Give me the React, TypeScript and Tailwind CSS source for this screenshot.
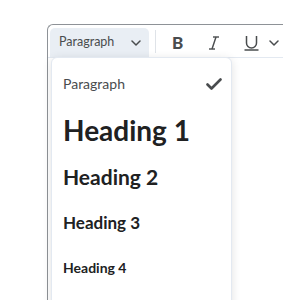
import React from "react";

const lato = { fontFamily: "Lato, 'Noto Sans', sans-serif" };

function Chevron({ className }: { className?: string }) {
  return (
    <svg width="10" height="6" viewBox="0 0 10 6" className={className}>
      <polyline points="1,1 5,5 9,1" fill="none" stroke="#494c4e" strokeWidth="1.5" strokeLinecap="round" strokeLinejoin="round" />
    </svg>
  );
}

export default function App() {
  const items = [
    { label: "Paragraph", cls: "text-[14px] font-normal text-[#494c4e]", check: true },
    { label: "Heading 1", cls: "text-[28px] font-bold text-[#202122]" },
    { label: "Heading 2", cls: "text-[21px] font-bold text-[#202122]" },
    { label: "Heading 3", cls: "text-[17px] font-bold text-[#202122]" },
    { label: "Heading 4", cls: "text-[14px] font-bold text-[#202122]" },
  ];
  return (
    <div className="relative w-[283px] h-[300px] bg-white overflow-hidden" style={lato}>
      <div className="ml-[47px] mt-[24px] h-[300px] border-l border-t border-[#8e9297] rounded-tl-[6px]">
        <div className="flex items-end h-[33px] pl-[2px] border-b border-[#e3e9f1]">
          <div className="flex items-center w-[99px] h-[29px] bg-[#e9eef4] rounded-t-[5px] pl-[9px]">
            <span className="text-[12.5px] text-[#494c4e] leading-none">Paragraph</span>
            <Chevron className="ml-auto mr-[8px]" />
          </div>
          <div className="self-center w-px h-[23px] bg-[#dfe3e8] ml-[6px]" />
          <div className="flex items-center h-[29px] self-end">
            <span className="ml-[16px] text-[17px] font-black text-[#494c4e] leading-none">B</span>
            <svg width="12" height="14" viewBox="0 0 12 14" className="ml-[25px]">
              <line x1="5" y1="1" x2="11" y2="1" stroke="#494c4e" strokeWidth="1.4" />
              <line x1="1" y1="13" x2="7" y2="13" stroke="#494c4e" strokeWidth="1.4" />
              <line x1="8" y1="1" x2="4" y2="13" stroke="#494c4e" strokeWidth="1.4" />
            </svg>
            <svg width="15" height="16" viewBox="0 0 15 16" className="ml-[24px]">
              <path d="M2.5 1 V8 a5 5 0 0 0 10 0 V1" fill="none" stroke="#494c4e" strokeWidth="1.5" />
              <line x1="0.5" y1="15" x2="14.5" y2="15" stroke="#494c4e" strokeWidth="1.5" />
            </svg>
            <Chevron className="ml-[10px]" />
          </div>
        </div>
      </div>
      <div className="absolute left-[51px] top-[57px] w-[181px] h-[260px] bg-white border border-[#e3e9f1] rounded-[6px] shadow-[0_2px_10px_rgba(0,0,0,0.12)] pt-[3px]">
        {items.map((it) => (
          <div key={it.label} className="flex items-center h-[46px] pl-[11px] pr-[9px]">
            <span className={`${it.cls} leading-none`}>{it.label}</span>
            {it.check && (
              <svg width="16" height="12" viewBox="0 0 16 12" className="ml-auto">
                <polyline points="1.5,6.5 5.5,10.5 14.5,1.5" fill="none" stroke="#494c4e" strokeWidth="2.6" strokeLinecap="round" strokeLinejoin="round" />
              </svg>
            )}
          </div>
        ))}
      </div>
    </div>
  );
}
